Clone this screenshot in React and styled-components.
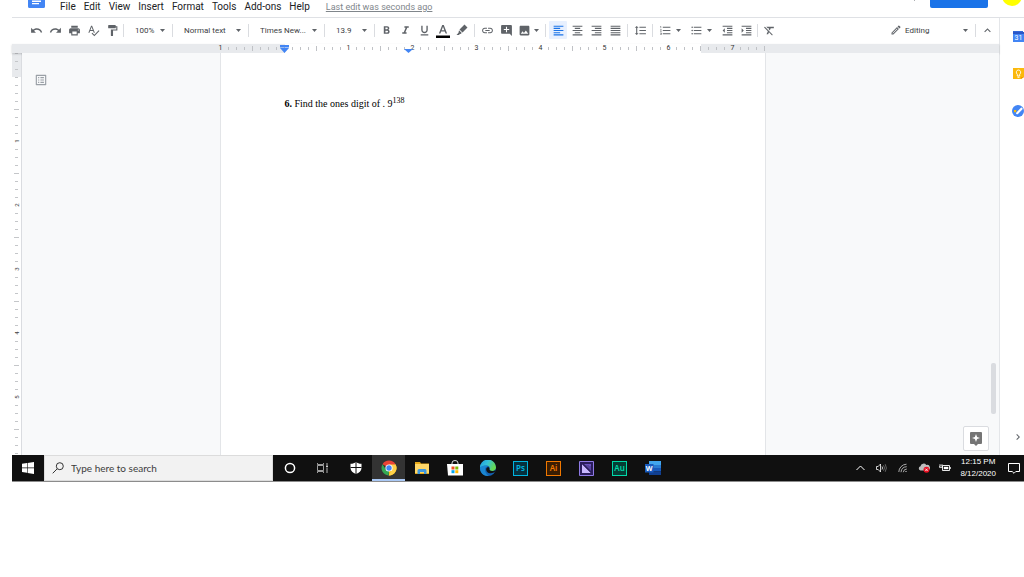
import { useState } from 'react';
import styled, { createGlobalStyle, css } from 'styled-components';
import {
  MdUndo, MdRedo, MdPrint, MdSpellcheck, MdFormatPaint, MdFormatBold, MdFormatItalic,
  MdFormatUnderlined, MdLink, MdAddComment, MdImage, MdFormatAlignLeft, MdFormatAlignCenter,
  MdFormatAlignRight, MdFormatAlignJustify, MdFormatLineSpacing, MdFormatListNumbered,
  MdFormatListBulleted, MdFormatIndentDecrease, MdFormatIndentIncrease, MdFormatClear,
  MdKeyboardArrowUp, MdOutlineEdit, MdChevronRight, MdListAlt,
} from 'react-icons/md';

const GlobalStyle = createGlobalStyle`
  * {
    box-sizing: border-box;
  }
  body {
    margin: 0;
    background: #fff;
    font-family: Roboto, "Liberation Sans", sans-serif;
    overflow-x: hidden;
  }
  button, input, select {
    font-family: inherit;
    margin: 0;
    padding: 0;
    border: none;
    background: none;
    color: inherit;
  }
`;

const Screen = styled.div`
  margin-left: 12px;
`;

/* ---------- header ---------- */

const Header = styled.header`
  overflow: hidden;
  border-bottom: 1px solid #dfe1e5;
`;

const HeaderRow = styled.div`
  display: flex;
  align-items: center;
  height: 42px;
  margin-top: -25px;
  padding: 0 2px 0 16px;
`;

const MenuBar = styled.nav`
  display: flex;
  align-items: center;
  align-self: flex-end;
  gap: 8px;
  height: 21px;
  margin-left: 15px;
  flex: 1;
`;

const MenuButton = styled.button`
  font-size: 10px;
  line-height: 12px;
  color: #202124;
`;

const LastEdit = styled.a`
  margin-left: 8px;
  font-size: 9px;
  line-height: 12px;
  color: #80868b;
`;

const HeaderIcon = styled.button`
  display: flex;
  margin-right: 10px;
  color: #5f6368;
`;

const ShareButton = styled.button`
  width: 58px;
  height: 23px;
  border-radius: 2px;
  background: #1a73e8;
`;

const Avatar = styled.button`
  width: 20px;
  height: 20px;
  margin-left: 14px;
  border-radius: 50%;
  background: #ff0;
`;

/* ---------- toolbar ---------- */

const Workspace = styled.div`
  display: grid;
  grid-template-columns: 1fr 25px;
`;

const Editor = styled.main`
  min-width: 0;
`;

const Toolbar = styled.div`
  display: flex;
  align-items: center;
  gap: 1px;
  height: 26px;
  padding: 0 3px 2px 15px;
  color: #5f6368;
`;

const ToolButton = styled.button`
  display: flex;
  flex: none;
  align-items: center;
  justify-content: center;
  width: 18px;
  height: 18px;
  font-size: 13px;
  border-radius: 1px;
  ${(p) => p.$menu && css`
    justify-content: flex-start;
    gap: 3px;
    width: 26px;
    padding-left: 2px;
  `}
  ${(p) => p.$menu === 'list' && css`
    gap: 4px;
    width: 30px;
    padding-left: 3px;
  `}
  ${(p) => p.$active && css`
    background: #e8f0fe;
    color: #1a73e8;
  `}
`;

const Divider = styled.span`
  flex: none;
  width: 1px;
  height: 13px;
  margin: 0 ${(p) => (p.$wide ? '2px' : '1px')};
  background: #dadce0;
`;

const Spacer = styled.span`
  flex: 1;
`;

const SelectBox = styled.div`
  display: grid;
  flex: none;
  align-items: center;
  width: ${(p) => p.$width}px;

  select {
    grid-area: 1 / 1;
    width: 100%;
    height: 18px;
    padding-left: ${(p) => (p.$tight ? '3px' : '9px')};
    appearance: none;
    font-size: 8px;
    color: #3c4043;
  }
  svg {
    grid-area: 1 / 1;
    justify-self: end;
    margin-right: 5px;
    pointer-events: none;
  }
`;

const ModeBox = styled.div`
  display: flex;
  align-items: center;
  font-size: 12px;
`;

const Caret = () => (
  <svg width="5" height="3" viewBox="0 0 5 3"><path d="M0 0h5L2.500 3z" fill="#5f6368" /></svg>
);

const Picker = ({ label, width, options, tight }) => (
  <SelectBox $width={width} $tight={tight}>
    <select aria-label={label}>
      {options.map((o) => <option key={o}>{o}</option>)}
    </select>
    <Caret />
  </SelectBox>
);

const TextColorIcon = () => (
  <svg width="14" height="18" viewBox="0 0 14 18">
    <path d="M6.200 4h1.600l3.300 8.500H9.600l-.8-2.100H5.200l-.8 2.100H2.900zM5.700 9.200h2.600L7 5.700z" fill="#5f6368" />
    <path d="M0 14.500h14V17H0z" fill="#000" />
  </svg>
);

const HighlightIcon = () => (
  <svg width="12" height="12" viewBox="0 0 12 12" fill="#5f6368">
    <path d="M8.500 .5 11.500 3.500 6.500 8.500 3.500 5.500zM3 6.200 5.800 9 4.500 10H3.800L3 11H.5L2.500 8.800z" />
  </svg>
);

/* ---------- rulers ---------- */

const TopRuler = styled.div`
  display: flex;
  justify-content: center;
  padding-right: 26px;
  height: 9px;
  background: #e8eaed;
  box-shadow: 0 1px 2px rgba(60, 64, 67, 0.25);
  position: relative;
`;

const RulerScale = styled.div`
  display: grid;
  grid-template-columns: repeat(69, 8px);
  width: 552px;
  background: linear-gradient(to right, transparent 68px, #fff 68px, #fff 484px, transparent 484px);
`;

const RulerCell = styled.span`
  display: flex;
  align-items: center;
  justify-content: center;
  font-size: 7px;
  line-height: 9px;
  color: #333;

  &::before {
    content: '';
    display: ${(p) => (p.$number ? 'none' : 'block')};
    width: 1px;
    height: ${(p) => (p.$half ? '5px' : '3px')};
    background: #c0c2c6;
  }
`;

const IndentMarkers = styled.div`
  position: absolute;
  inset: 0 26px 0 0;
  display: flex;
  justify-content: center;

  svg {
    width: 552px;
    height: 9px;
  }
`;

const SideRuler = styled.div`
  overflow: hidden;
  border-right: 1px solid #dadce0;
  background: linear-gradient(#e8eaed 24px, #fff 24px);
`;

const SideScale = styled.div`
  display: grid;
  grid-auto-rows: 8px;
  margin: -4px 0 -2px;
`;

const SideCell = styled.span`
  display: flex;
  align-items: center;
  justify-content: center;
  font-size: 6px;
  line-height: 8px;
  color: #444;

  span {
    transform: rotate(-90deg);
  }
  &::before {
    content: '';
    display: ${(p) => (p.$number ? 'none' : 'block')};
    width: ${(p) => (p.$half ? '5px' : '3px')};
    height: 1px;
    background: #c4c6c9;
  }
`;

// eight ticks to the inch, counted from the margin
const ticks = (from, count) => Array.from({ length: count }, (_, i) => {
  const n = from + i;
  return { n, half: n % 8 === 4 || n % 8 === -4, number: n !== 0 && n % 8 === 0 ? Math.abs(n / 8) : null };
});

/* ---------- document ---------- */

const DocumentArea = styled.div`
  display: grid;
  grid-template-columns: 10px 1fr;
`;

const Canvas = styled.div`
  position: relative;
  display: flex;
  justify-content: center;
  padding-right: 36px;
  background: #f8f9fa;
`;

const Page = styled.article`
  width: 546px;
  padding: 44px 64px;
  border: solid #e3e5e8;
  border-width: 0 1px;
  background: #fff;
`;

const Question = styled.p`
  margin: 0;
  font-family: "Liberation Serif", serif;
  font-size: 10px;
  line-height: 14px;
  color: #000;

  sup {
    font-size: 8px;
    line-height: 0;
    vertical-align: 4px;
  }
`;

const OutlineButton = styled.button`
  position: absolute;
  top: 20px;
  left: 12px;
  display: flex;
  font-size: 14px;
  color: #9aa0a6;
`;

const ScrollThumb = styled.div`
  position: absolute;
  right: 3px;
  bottom: 41px;
  width: 5px;
  height: 51px;
  border-radius: 2px;
  background: #dadce0;
`;

const ExploreButton = styled.button`
  position: absolute;
  right: 10px;
  bottom: 4px;
  display: flex;
  align-items: center;
  justify-content: center;
  width: 26px;
  height: 25px;
  border: 1px solid #dadce0;
  border-radius: 2px;
  background: #fff;
`;

const SidePanel = styled.aside`
  display: flex;
  flex-direction: column;
  gap: 25px;
  padding: 13px 0 11px 12px;
  border-left: 1px solid #e4e6e9;
  color: #5f6368;
`;

const PanelButton = styled.button`
  display: flex;
  width: 12px;
  font-size: 14px;
  ${(p) => p.$last && 'margin-top: auto;'}
`;

/* ---------- taskbar ---------- */

const Taskbar = styled.footer`
  display: flex;
  height: 27px;
  border-bottom: 1px solid #8c8c8c;
  background: #101010;
  color: #fff;
  font-family: "Noto Sans", "Open Sans", sans-serif;
`;

const StartButton = styled.button`
  display: flex;
  align-items: center;
  justify-content: center;
  width: 32px;
`;

const SearchBox = styled.label`
  display: flex;
  align-items: center;
  gap: 7px;
  width: 229px;
  padding-left: 7px;
  border: 1px solid #dcdcdc;
  background: #f2f2f2;

  input {
    flex: 1;
    min-width: 0;
    outline: none;
    font-family: Lato, "Open Sans", sans-serif;
    font-size: 10px;
  }
  input::placeholder {
    color: #3c3c3c;
    opacity: 1;
  }
`;

const TaskButton = styled.button`
  display: flex;
  align-items: center;
  justify-content: center;
  width: 33px;
  border-bottom: 2px solid ${(p) => (p.$active ? '#a9c8f5' : 'transparent')};
  border-top: 2px solid ${(p) => (p.$active ? '#333' : 'transparent')};
  background: ${(p) => (p.$active ? '#333' : 'none')};
`;

const AdobeTile = styled.span`
  display: flex;
  align-items: center;
  justify-content: center;
  width: 15px;
  height: 15px;
  border: 1px solid ${(p) => p.$color};
  background: ${(p) => p.$fill};
  color: ${(p) => p.$color};
  font-size: 8px;
  font-weight: 600;
  line-height: 12px;
`;

const Tray = styled.div`
  display: flex;
  align-items: center;
  margin-left: auto;
`;

const TrayButton = styled.button`
  display: flex;
  align-items: center;
  justify-content: center;
  width: 21px;
  height: 26px;
`;

const Clock = styled.time`
  margin: 0 7px 0 5px;
  font-family: "Liberation Sans", sans-serif;
  font-size: 8px;
  line-height: 12px;
  text-align: center;
`;

const DocsLogo = () => (
  <svg width="17" height="24" viewBox="0 0 17 24">
    <path d="M1.500 0H11l6 6v16.500a1.500 1.500 0 0 1-1.500 1.500h-14A1.500 1.500 0 0 1 0 22.500v-21A1.500 1.500 0 0 1 1.500 0z" fill="#4285f4" />
    <path d="M4 11h9v1.500H4zM4 14h9v1.500H4zM4 16.500h9V18H4zM4 19h7v1.300H4z" fill="#fff" />
  </svg>
);

const ExploreIcon = () => (
  <svg width="14" height="15" viewBox="0 0 14 15">
    <path d="M2 1h10a1 1 0 0 1 1 1v10a1 1 0 0 1-1 1H9l-2 2-2-2H2a1 1 0 0 1-1-1V2a1 1 0 0 1 1-1z" fill="#757575" />
    <path d="M7 3l1.100 2.900L11 7 8.100 8.100 7 11 5.900 8.100 3 7l2.900-1.100z" fill="#fff" />
  </svg>
);

const CalendarIcon = () => (
  <svg width="12" height="12" viewBox="0 0 12 12">
    <path d="M1 0h10v2H1z" fill="#3367d6" />
    <path d="M1 1h11v10H1z" fill="#4285f4" />
    <path d="M1 1h11v2H1z" fill="#2a56c6" />
    <text x="6.500" y="9" textAnchor="middle" fontSize="7" fontFamily="Roboto, sans-serif" fill="#fff">31</text>
  </svg>
);

const KeepIcon = () => (
  <svg width="12" height="12" viewBox="0 0 12 12">
    <path d="M1 0h11v9l-3 2H1z" fill="#fbb80c" />
    <path d="M12 9l-3 2V9z" fill="#f29900" />
    <path d="M6.500 2a2.300 2.300 0 0 0-1.200 4.200V8h2.400V6.200A2.300 2.300 0 0 0 6.500 2zM5.500 9.300h2" fill="none" stroke="#fff" strokeWidth=".9" />
  </svg>
);

const TasksIcon = () => (
  <svg width="12" height="12" viewBox="0 0 12 12">
    <circle cx="6" cy="6" r="6" fill="#4285f4" />
    <path d="M5.200 8.200 9.500 3.700" stroke="#fff" strokeWidth="2.200" strokeLinecap="round" />
    <path d="M2 5h2.200v2.200H2z" fill="#fbbc04" />
  </svg>
);

const WindowsIcon = () => (
  <svg width="12" height="12" viewBox="0 0 12 12" fill="#fff">
    <path d="M0 1.800 5 1.100v4.500H0zM5.600 1 12 0v5.600H5.600zM0 6.300h5v4.500l-5-.7zM5.600 6.300H12V12l-6.400-1z" />
  </svg>
);

const SearchIcon = () => (
  <svg width="12" height="12" viewBox="0 0 12 12" fill="none" stroke="#333">
    <circle cx="7.800" cy="4.200" r="3.500" />
    <path d="M5.200 6.800 .7 11.300" />
  </svg>
);

const CortanaIcon = () => (
  <svg width="12" height="12" viewBox="0 0 12 12"><circle cx="6" cy="6" r="4.600" fill="none" stroke="#fff" strokeWidth="1.500" /></svg>
);

const TaskViewIcon = () => (
  <svg width="12" height="12" viewBox="0 0 12 12" fill="none" stroke="#ddd">
    <path d="M.5 1v1.500h6V1M.5 3.500v5h6v-5zM.5 11V9.500h6V11" strokeWidth=".7" />
    <path d="M10 1v2M10 6v5" strokeWidth=".8" />
    <path d="M9.200 3.500h1.600v1.800H9.200z" fill="#fff" stroke="none" />
  </svg>
);

const ShieldIcon = () => (
  <svg width="12" height="12" viewBox="0 0 12 12">
    <path d="M6 0c1.500 1.200 3 1.700 5.500 1.800V6c0 3-2.500 5-5.500 6C3 11 .5 9 .5 6V1.800C3 1.700 4.500 1.200 6 0z" fill="#fff" />
    <path d="M6 0v12M.5 5.500h11" stroke="#101010" />
  </svg>
);

const ChromeIcon = () => (
  <svg width="16" height="16" viewBox="0 0 16 16">
    <path d="M8 8 1.500 4.250A7.500 7.500 0 0 1 14.500 4.250z" fill="#ea4335" />
    <path d="M8 8l6.500-3.750A7.500 7.500 0 0 1 8 15.500z" fill="#fbbc04" />
    <path d="M8 4.500h6.600A7.500 7.500 0 0 1 7.500 15.500L11 9.800z" fill="#fdd04a" />
    <path d="M8 11.500 7.600 15.500A7.500 7.500 0 0 1 1.500 4.250L5 9.800z" fill="#34a853" />
    <circle cx="8" cy="8" r="3.600" fill="#fff" />
    <circle cx="8" cy="8" r="2.700" fill="#4285f4" />
  </svg>
);

const FolderIcon = () => (
  <svg width="16" height="14" viewBox="0 0 16 14">
    <path d="M1 1h5l1 1.500h8V13H1z" fill="#e6a817" />
    <path d="M1 3h14v9H1z" fill="#ffd768" />
    <path d="M3.500 13V9.500A1.500 1.500 0 0 1 5 8h6a1.500 1.500 0 0 1 1.500 1.500V13H10v-2H6v2z" fill="#3f97dd" />
  </svg>
);

const StoreIcon = () => (
  <svg width="16" height="16" viewBox="0 0 16 16">
    <path d="M5 5V3a3 2.500 0 0 1 6 0v2" fill="none" stroke="#ddd" />
    <path d="M0 4h16v11.500H1z" fill="#fff" />
    <path d="M4.500 6.500h3v3h-3z" fill="#f25022" />
    <path d="M8.300 6.500h3v3h-3z" fill="#7fba00" />
    <path d="M4.500 10.200h3v3h-3z" fill="#00a4ef" />
    <path d="M8.300 10.200h3v3h-3z" fill="#ffb900" />
  </svg>
);

const EdgeIcon = () => (
  <svg width="16" height="16" viewBox="0 0 16 16">
    <defs>
      <linearGradient id="edgeTop" x1="0" x2="1" y1="0" y2=".4">
        <stop offset="0" stopColor="#1c9de0" />
        <stop offset=".5" stopColor="#35c1d8" />
        <stop offset="1" stopColor="#66d950" />
      </linearGradient>
    </defs>
    <circle cx="8" cy="8" r="8" fill="#1262b3" />
    <path d="M0 8a8 8 0 0 1 16-.8c.1 2.400-1.800 3.800-4.200 3.800-1.900 0-2.700-.8-2.300-1.400C10.600 7.800 9.300 5.500 6.500 5.500 3.500 5.500.6 7 0 8z" fill="url(#edgeTop)" />
    <path d="M6.500 8c-1.200 3 1.500 5.500 4.500 5.300 1.600 0 3-.8 4.200-1.700L16 9.500c-1.500 2-6.500 2-6.500.1C9.700 8.500 9 7 8 7z" fill="#101010" />
    <path d="M0 8c.8-2 5-3.500 7.500-1.500C4 7 4.200 13 8.500 16 3 16.200 0 12.500 0 8z" fill="#1b86d1" />
  </svg>
);

const EncoderIcon = () => (
  <svg width="15" height="15" viewBox="0 0 15 15">
    <path d="M.5.500h14v14H.5z" fill="#2a1c5c" stroke="#8f7ae5" />
    <path d="M3 3l9 9H3z" fill="#c9b8ff" />
    <path d="M5 3h7v7z" fill="#6b55bd" />
    <path d="M3 3l9 9M7 4v2M9 4v4M11 5v5" stroke="#2a1c5c" strokeWidth=".6" />
  </svg>
);

const WordIcon = () => (
  <svg width="16" height="14" viewBox="0 0 16 14">
    <path d="M4 0h12v4H4z" fill="#41a5ee" />
    <path d="M4 4h12v3H4z" fill="#2b7cd3" />
    <path d="M4 7h12v3.500H4z" fill="#185abd" />
    <path d="M4 10.500h12V14H4z" fill="#103f91" />
    <path d="M0 3h8.500v8.500H0z" fill="#185abd" />
    <text x="4.200" y="10" textAnchor="middle" fontSize="7" fontWeight="700" fontFamily="Open Sans, sans-serif" fill="#fff">W</text>
  </svg>
);

const ArrowUpIcon = () => (
  <svg width="9" height="6" viewBox="0 0 9 6" fill="none" stroke="#fff"><path d="M.5 5 4.500 1l4 4" /></svg>
);

const SpeakerIcon = () => (
  <svg width="11" height="10" viewBox="0 0 11 10" fill="none" stroke="#fff" strokeWidth=".8">
    <path d="M.5 3.500h1.700L4.500 1v8L2.200 6.500H.5z" />
    <path d="M6 3.500q1 1.500 0 3" />
    <path d="M7.500 2.300q2 2.700 0 5.400M9.200 1.200q2.400 3.800 0 7.600" stroke="#777" />
  </svg>
);

const WifiIcon = () => (
  <svg width="10" height="10" viewBox="0 0 10 10" fill="none" stroke="#bbb" strokeWidth=".9">
    <path d="M.8 9A8 8 0 0 1 8.500 1.200M3 9.200a6 6 0 0 1 5.700-5.500M5.300 9.200A3.600 3.600 0 0 1 8.800 6" />
    <path d="M7.500 8.500h1" stroke="#fff" />
  </svg>
);

const CloudIcon = () => (
  <svg width="12" height="10" viewBox="0 0 12 10">
    <path d="M2.500 7.500a2.200 2.200 0 0 1 0-4.300A3.200 3.200 0 0 1 8.300 2 2.800 2.800 0 0 1 10 7.500z" fill="#bdbdbd" />
    <circle cx="8.500" cy="6.800" r="3" fill="#e81123" />
    <path d="M7.300 5.600l2.400 2.400M9.700 5.600 7.300 8" stroke="#fff" strokeWidth=".8" />
  </svg>
);

const BatteryIcon = () => (
  <svg width="12" height="8" viewBox="0 0 12 8">
    <path d="M3.500 1.500h7v5h-7zM11.300 3v2" fill="none" stroke="#fff" strokeWidth=".9" />
    <path d="M4.800 2.800h4.500v2.400H4.800z" fill="#fff" />
    <path d="M1 0v2M3 0v2M.5 2h3v1.500h-3z" fill="none" stroke="#fff" strokeWidth=".7" />
  </svg>
);

const NotificationIcon = () => (
  <svg width="12" height="12" viewBox="0 0 12 12" fill="none" stroke="#fff">
    <path d="M.5 1.500h11v8H7.800L6 11.300 4.200 9.500H.5z" />
  </svg>
);

const menus = ['File', 'Edit', 'View', 'Insert', 'Format', 'Tools', 'Add-ons', 'Help'];

const alignments = [
  { name: 'Left align', Icon: MdFormatAlignLeft },
  { name: 'Center align', Icon: MdFormatAlignCenter },
  { name: 'Right align', Icon: MdFormatAlignRight },
  { name: 'Justify', Icon: MdFormatAlignJustify },
];

const apps = [
  { name: 'Cortana', icon: <CortanaIcon /> },
  { name: 'Task View', icon: <TaskViewIcon /> },
  { name: 'Windows Security', icon: <ShieldIcon /> },
  { name: 'Google Chrome', icon: <ChromeIcon />, active: true },
  { name: 'File Explorer', icon: <FolderIcon /> },
  { name: 'Microsoft Store', icon: <StoreIcon /> },
  { name: 'Microsoft Edge', icon: <EdgeIcon /> },
  { name: 'Photoshop', icon: <AdobeTile $color="#00b4e0" $fill="#06303e">Ps</AdobeTile> },
  { name: 'Illustrator', icon: <AdobeTile $color="#f07800" $fill="#3a1d02">Ai</AdobeTile> },
  { name: 'Media Encoder', icon: <EncoderIcon /> },
  { name: 'Audition', icon: <AdobeTile $color="#00d8a8" $fill="#053c34">Au</AdobeTile> },
  { name: 'Word', icon: <WordIcon /> },
];

const tray = [
  { name: 'Show hidden icons', icon: <ArrowUpIcon /> },
  { name: 'Volume', icon: <SpeakerIcon /> },
  { name: 'Network', icon: <WifiIcon /> },
  { name: 'OneDrive', icon: <CloudIcon /> },
  { name: 'Battery', icon: <BatteryIcon /> },
];

const Tool = ({ name, children, ...rest }) => (
  <ToolButton aria-label={name} {...rest}>{children}</ToolButton>
);

const DocsToolbar = () => {
  const [align, setAlign] = useState('Left align');

  return (
    <Toolbar>
      <Tool name="Undo"><MdUndo /></Tool>
      <Tool name="Redo"><MdRedo /></Tool>
      <Tool name="Print"><MdPrint /></Tool>
      <Tool name="Spelling check"><MdSpellcheck /></Tool>
      <Tool name="Paint format"><MdFormatPaint /></Tool>
      <Divider />
      <Picker label="Zoom" width={44} options={['100%', '75%', '50%']} />
      <Divider />
      <Picker label="Styles" width={71} options={['Normal text', 'Title', 'Heading 1']} />
      <Divider />
      <Picker label="Font" width={71} options={['Times New...', 'Arial']} />
      <Divider />
      <Picker label="Font size" width={45} options={['13.9', '11', '12']} />
      <Divider />
      <Tool name="Bold"><MdFormatBold /></Tool>
      <Tool name="Italic"><MdFormatItalic /></Tool>
      <Tool name="Underline"><MdFormatUnderlined /></Tool>
      <Tool name="Text color"><TextColorIcon /></Tool>
      <Tool name="Highlight color"><HighlightIcon /></Tool>
      <Divider $wide />
      <Tool name="Insert link"><MdLink /></Tool>
      <Tool name="Add comment"><MdAddComment /></Tool>
      <Tool name="Insert image" $menu="image"><MdImage /><Caret /></Tool>
      <Divider $wide />
      {alignments.map(({ name, Icon }) => (
        <Tool key={name} name={name} $active={align === name} onClick={() => setAlign(name)}><Icon /></Tool>
      ))}
      <Divider $wide />
      <Tool name="Line spacing"><MdFormatLineSpacing /></Tool>
      <Divider $wide />
      <Tool name="Numbered list" $menu="list"><MdFormatListNumbered /><Caret /></Tool>
      <Tool name="Bulleted list" $menu="list"><MdFormatListBulleted /><Caret /></Tool>
      <Tool name="Decrease indent"><MdFormatIndentDecrease /></Tool>
      <Tool name="Increase indent"><MdFormatIndentIncrease /></Tool>
      <Divider />
      <Tool name="Clear formatting"><MdFormatClear /></Tool>
      <Spacer />
      <ModeBox>
        <MdOutlineEdit />
        <Picker label="Editing mode" width={71} tight options={['Editing', 'Suggesting', 'Viewing']} />
      </ModeBox>
      <Divider />
      <Tool name="Hide the menus"><MdKeyboardArrowUp /></Tool>
    </Toolbar>
  );
};

export default function App() {
  return (
    <>
      <GlobalStyle />
      <Screen>
        <Header>
          <HeaderRow>
            <DocsLogo />
            <MenuBar>
              {menus.map((m) => <MenuButton key={m}>{m}</MenuButton>)}
              <LastEdit href="#history">Last edit was seconds ago</LastEdit>
            </MenuBar>
            <HeaderIcon aria-label="Comment history">
              <svg width="10" height="10" viewBox="0 0 10 10"><path d="M0 0h10v7H6L4.500 10 3 7H0z" fill="currentColor" /></svg>
            </HeaderIcon>
            <ShareButton aria-label="Share" />
            <Avatar aria-label="Account" />
          </HeaderRow>
        </Header>

        <Workspace>
          <Editor>
            <DocsToolbar />
            <TopRuler>
              <RulerScale>
                {ticks(-8, 69).map((t) => (
                  <RulerCell key={t.n} $half={t.half} $number={t.number}>{t.number}</RulerCell>
                ))}
              </RulerScale>
              <IndentMarkers>
                <svg viewBox="0 0 552 9" fill="#4285f4">
                  <path d="M63 1h9v2.500h-9zM63 4h9l-4.500 5zM187 5h9l-4.500 4z" />
                </svg>
              </IndentMarkers>
            </TopRuler>
            <DocumentArea>
              <SideRuler>
                <SideScale>
                  {ticks(-3, 51).map((t) => (
                    <SideCell key={t.n} $half={t.half} $number={t.number}>
                      {t.number && <span>{t.number}</span>}
                    </SideCell>
                  ))}
                </SideScale>
              </SideRuler>
              <Canvas>
                <OutlineButton aria-label="Show outline"><MdListAlt /></OutlineButton>
                <Page>
                  <Question><b>6.</b> Find the ones digit of . 9<sup>138</sup></Question>
                </Page>
                <ScrollThumb />
                <ExploreButton aria-label="Explore"><ExploreIcon /></ExploreButton>
              </Canvas>
            </DocumentArea>
          </Editor>
          <SidePanel>
            <PanelButton aria-label="Calendar"><CalendarIcon /></PanelButton>
            <PanelButton aria-label="Keep"><KeepIcon /></PanelButton>
            <PanelButton aria-label="Tasks"><TasksIcon /></PanelButton>
            <PanelButton aria-label="Hide side panel" $last><MdChevronRight /></PanelButton>
          </SidePanel>
        </Workspace>

        <Taskbar>
          <StartButton aria-label="Start"><WindowsIcon /></StartButton>
          <SearchBox>
            <SearchIcon />
            <input type="text" aria-label="Search" placeholder="Type here to search" />
          </SearchBox>
          {apps.map((a) => (
            <TaskButton key={a.name} aria-label={a.name} $active={a.active}>{a.icon}</TaskButton>
          ))}
          <Tray>
            {tray.map((t) => <TrayButton key={t.name} aria-label={t.name}>{t.icon}</TrayButton>)}
            <Clock>12:15 PM<br />8/12/2020</Clock>
            <TrayButton aria-label="Notifications"><NotificationIcon /></TrayButton>
          </Tray>
        </Taskbar>
      </Screen>
    </>
  );
}
